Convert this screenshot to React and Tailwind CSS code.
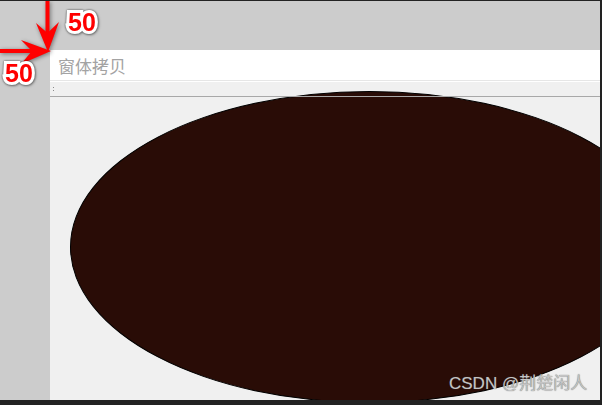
import React from "react";

export default function App() {
  return (
    <div className="relative w-[602px] h-[405px] bg-[#cccccc] border-t border-r-2 border-b-[5px] border-[#222222] overflow-hidden">
      <div className="pt-[49px] pl-[50px] h-full">
        <div className="relative w-[550px] h-[350px] flex flex-col overflow-hidden bg-[#f0f0f0]">
          <div className="h-[30px] shrink-0 bg-white flex items-center pl-[8px] text-[17px] leading-none text-[#a3a3a3] [font-family:'Noto_Sans_CJK_SC',sans-serif]">
            窗体拷贝
          </div>
          <div className="h-px shrink-0 bg-[#e6e6e6]" />
          <div className="h-px shrink-0 bg-white" />
          <div className="h-[14px] shrink-0 bg-[#f0f0f0] flex flex-col justify-center gap-[2px] pl-[3px]">
            <div className="w-[1px] h-[1px] bg-[#8a8a8a]" />
            <div className="w-[1px] h-[1px] bg-[#8a8a8a]" />
          </div>
          <div className="relative z-10 h-px shrink-0 bg-[#a8a8a8]" />
          <div className="flex-1" />
          <div className="absolute left-[20px] top-[41px] w-[599px] h-[312px] rounded-[50%] bg-[#290c06] border border-black" />
        </div>
      </div>

      <div className="absolute left-[449px] top-[374px] text-[17px] leading-none text-[#c4c4c4] [font-family:'Liberation_Sans','Noto_Sans_CJK_SC',sans-serif] [text-shadow:0_0_1px_#555]">
        CSDN @荆楚闲人
      </div>

      <svg className="absolute left-0 top-0 [filter:drop-shadow(1px_1px_2px_rgba(0,0,0,0.45))]" width="70" height="70" viewBox="0 0 70 70">
        <rect x="45.5" y="0" width="4" height="36" fill="#ff0000" />
        <path d="M36 22 L48 51 L59 21 L47.5 32 Z" fill="#ff0000" />
        <rect x="0" y="48" width="36" height="4" fill="#ff0000" />
        <path d="M21 39 L51 50 L21 63 L32 50 Z" fill="#ff0000" />
      </svg>

      <div className="absolute left-[68px] top-[9px] text-[25px] font-bold leading-none text-[#ff0000] [font-family:'Liberation_Sans',sans-serif] [-webkit-text-stroke:6px_white] [paint-order:stroke_fill] [filter:drop-shadow(0_0_1px_rgba(0,0,0,0.6))_drop-shadow(1px_1px_1px_rgba(0,0,0,0.3))]">
        50
      </div>
      <div className="absolute left-[5px] top-[60px] text-[25px] font-bold leading-none text-[#ff0000] [font-family:'Liberation_Sans',sans-serif] [-webkit-text-stroke:6px_white] [paint-order:stroke_fill] [filter:drop-shadow(0_0_1px_rgba(0,0,0,0.6))_drop-shadow(1px_1px_1px_rgba(0,0,0,0.3))]">
        50
      </div>
    </div>
  );
}
